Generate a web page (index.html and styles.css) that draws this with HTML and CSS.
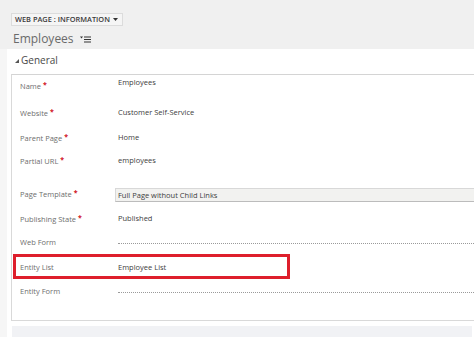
FILE: index.html
```html
<!DOCTYPE html>
<html>
<head>
<meta charset="utf-8">
<link rel="stylesheet" href="styles.css">
</head>
<body>
<div class="header">
  <div class="crumb">WEB PAGE : INFORMATION
    <svg class="crumb-caret" width="5" height="3" viewBox="0 0 5 3"><polygon points="0,0 5,0 2.5,3" fill="#333"/></svg>
  </div>
  <div class="title">Employees
    <svg class="title-icon" width="11" height="7" viewBox="0 0 11 7"><polygon points="0,0.5 3,0.5 1.5,2.5" fill="#333"/><rect x="4" y="0.5" width="7" height="1" fill="#333"/><rect x="4" y="3" width="7" height="1" fill="#333"/><rect x="4" y="5.5" width="7" height="1" fill="#333"/></svg>
  </div>
</div>
<div class="main">
  <div class="section-head">
    <svg class="section-tri" width="4" height="4" viewBox="0 0 4 4"><polygon points="4,0 4,4 0,4" fill="#555"/></svg>
    <span>General</span>
  </div>
  <div class="box">
    <div class="row r-name"><div class="label">Name<span class="req">*</span></div><div class="value high">Employees</div></div>
    <div class="row r-website"><div class="label">Website<span class="req">*</span></div><div class="value">Customer Self-Service</div></div>
    <div class="row r-parent"><div class="label">Parent Page<span class="req">*</span></div><div class="value">Home</div></div>
    <div class="row r-partial"><div class="label">Partial URL<span class="req">*</span></div><div class="value">employees</div></div>
    <div class="row r-template"><div class="label">Page Template<span class="req">*</span></div><div class="input">Full Page without Child Links</div></div>
    <div class="row r-publishing"><div class="label">Publishing State<span class="req">*</span></div><div class="value">Published</div></div>
    <div class="row r-webform"><div class="label">Web Form</div><div class="dots"></div></div>
    <div class="row r-entitylist"><div class="label">Entity List</div><div class="value">Employee List</div></div>
    <div class="row r-entityform"><div class="label">Entity Form</div><div class="dots"></div></div>
  </div>
  <div class="band"></div>
</div>
</body>
</html>
```
FILE: styles.css
```css
html, body {
  margin: 0;
  padding: 0;
  background: #ffffff;
  overflow: hidden;
  width: 474px;
  height: 337px;
  font-family: "Open Sans", "Noto Sans", sans-serif;
}

.header {
  height: 49px;
  box-sizing: border-box;
  background: #f0f0f0;
  padding: 5px 0 0 11px;
}

.crumb {
  display: inline-flex;
  align-items: center;
  height: 13px;
  box-sizing: border-box;
  border: 1px solid #dcdcdc;
  background: #f5f5f5;
  padding: 0 4px 0 3px;
  font-size: 7.4px;
  font-weight: 600;
  color: #3a3a3a;
  white-space: nowrap;
}

.crumb-caret {
  margin-left: 3px;
}

.title {
  display: flex;
  align-items: center;
  margin-top: 3px;
  padding-left: 2px;
  height: 18px;
  font-size: 12px;
  color: #6a6a6a;
  line-height: 18px;
}

.title-icon {
  margin-left: 6px;
  margin-top: 1px;
}

.main {
  background: linear-gradient(to right, #f6f6f6 0, #f6f6f6 7px, #ffffff 7px);
  height: 288px;
  overflow: hidden;
}

.section-head {
  display: flex;
  align-items: center;
  margin-top: 5px;
  height: 12px;
  padding-left: 15px;
  font-size: 10px;
  color: #484848;
}

.section-tri {
  margin-right: 2px;
  margin-top: 2px;
}

.box {
  margin-top: 8px;
  margin-left: 11px;
  background: #fff;
  border-left: 1px solid #d9d9d9;
  border-top: 1px solid #d4d4d4;
  border-bottom: 1px solid #d9d9d9;
  padding-bottom: 20px;
}

.row {
  display: flex;
  align-items: center;
  height: 18px;
  font-size: 7.5px;
}

.label {
  width: 98px;
  flex: none;
  padding-left: 8px;
  color: #6e6e6e;
  white-space: nowrap;
}

.req {
  color: #d0101a;
  font-weight: 700;
  font-size: 7px;
  margin-left: 2px;
  vertical-align: 2px;
}

.value {
  color: #404040;
  white-space: nowrap;
}

.value.high {
  margin-bottom: 6px;
}

.input {
  align-self: flex-end;
  flex: 1;
  height: 14px;
  box-sizing: border-box;
  margin-left: -3px;
  padding-left: 2px;
  background: #f2f2f0;
  border: 1px solid #d8d8d8;
  border-bottom-color: #bcbcbc;
  border-right: none;
  color: #404040;
  display: flex;
  align-items: center;
  white-space: nowrap;
}

.dots {
  flex: 1;
  height: 0;
  border-top: 1px dotted #9a9a9a;
  margin-top: 2px;
}

.r-name { margin-top: 1px; }
.r-website { margin-top: 9px; }
.r-parent { margin-top: 7px; }
.r-partial { margin-top: 5px; }
.r-template { margin-top: 15px; }
.r-publishing { margin-top: 7px; }
.r-webform { margin-top: 6px; }
.r-entitylist { margin-top: 6px; height: 19px; position: relative; }
.r-entityform { margin-top: 6px; }

.r-entitylist::after {
  content: "";
  position: absolute;
  left: 1px;
  top: -3px;
  width: 277px;
  height: 25px;
  box-sizing: border-box;
  border: 3px solid #de1f2c;
}

.band {
  margin: 5px 2px 0 12px;
  height: 11px;
  background: #f1f2f5;
}
```
